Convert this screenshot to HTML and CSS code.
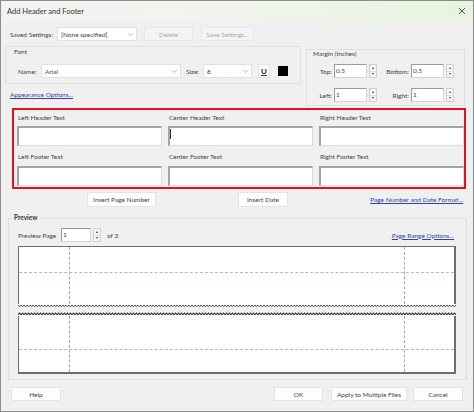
FILE: index.html
```html
<!DOCTYPE html>
<html lang="en">
<head>
    <meta charset="UTF-8">
    <meta name="viewport" content="width=device-width, initial-scale=1.0">
    <title>Add Header and Footer</title>
    <link rel="stylesheet" href="styles.css">
</head>
<body>
    <div class="window">
        <div class="titlebar">
            <span class="title">Add Header and Footer</span>
            <svg class="close" width="8" height="8" viewBox="0 0 8 8">
                <path d="M1 1 L7 7 M7 1 L1 7" stroke="#444" stroke-width="0.9" fill="none"/>
            </svg>
        </div>

        <div class="saved-row">
            <span class="saved-label">Saved Settings:</span>
            <div class="dropdown saved-select">[None specified]
                <svg class="chev" width="5" height="3" viewBox="0 0 5 3"><path d="M0.3 0.3 L2.5 2.5 L4.7 0.3" stroke="#999" stroke-width="0.7" fill="none"/></svg>
            </div>
            <div class="btn disabled delete-btn">Delete</div>
            <div class="btn disabled save-btn">Save Settings...</div>
        </div>

        <div class="settings">
            <div class="font-col">
                <div class="group font-group">
                    <div class="group-title">Font</div>
                    <div class="font-row">
                        <span class="name-label">Name:</span>
                        <div class="dropdown name-select">Arial
                            <svg class="chev" width="5" height="3" viewBox="0 0 5 3"><path d="M0.3 0.3 L2.5 2.5 L4.7 0.3" stroke="#999" stroke-width="0.7" fill="none"/></svg>
                        </div>
                        <span class="size-label">Size:</span>
                        <div class="dropdown size-select">8
                            <svg class="chev" width="5" height="3" viewBox="0 0 5 3"><path d="M0.3 0.3 L2.5 2.5 L4.7 0.3" stroke="#999" stroke-width="0.7" fill="none"/></svg>
                        </div>
                        <div class="underline-btn">U</div>
                        <div class="color-swatch"></div>
                    </div>
                </div>
                <a class="link appearance" href="#">Appearance Options...</a>
            </div>

            <div class="group margin-group">
                <div class="group-title">Margin (Inches)</div>
                <div class="margin-row first">
                    <span class="m-label">Top:</span>
                    <div class="num-input">0.5</div>
                    <div class="spinner"><span class="up"></span><span class="down"></span></div>
                    <span class="m-label wide">Bottom:</span>
                    <div class="num-input">0.5</div>
                    <div class="spinner"><span class="up"></span><span class="down"></span></div>
                </div>
                <div class="margin-row second">
                    <span class="m-label">Left:</span>
                    <div class="num-input">1</div>
                    <div class="spinner"><span class="up"></span><span class="down"></span></div>
                    <span class="m-label wide">Right:</span>
                    <div class="num-input">1</div>
                    <div class="spinner"><span class="up"></span><span class="down"></span></div>
                </div>
            </div>
        </div>

        <div class="hf-box">
            <div class="hf-col">
                <div class="hf-label">Left Header Text</div>
                <div class="text-box"></div>
                <div class="hf-label footer">Left Footer Text</div>
                <div class="text-box footer"></div>
            </div>
            <div class="hf-col">
                <div class="hf-label">Center Header Text</div>
                <div class="text-box"><span class="caret"></span></div>
                <div class="hf-label footer">Center Footer Text</div>
                <div class="text-box footer"></div>
            </div>
            <div class="hf-col">
                <div class="hf-label">Right Header Text</div>
                <div class="text-box"></div>
                <div class="hf-label footer">Right Footer Text</div>
                <div class="text-box footer"></div>
            </div>
        </div>

        <div class="insert-row">
            <div class="btn page-num-btn">Insert Page Number</div>
            <div class="btn date-btn">Insert Date</div>
            <a class="link format-link" href="#">Page Number and Date Format...</a>
        </div>

        <div class="preview-group">
            <span class="preview-title">Preview</span>
            <div class="preview-row">
                <span class="pp-label">Preview Page</span>
                <div class="num-input page-input">1</div>
                <div class="spinner"><span class="up"></span><span class="down"></span></div>
                <span class="of-total">of 3</span>
                <a class="link range-link" href="#">Page Range Options...</a>
            </div>
            <div class="sheet">
                <div class="page page-top">
                    <div class="guide-v left"></div>
                    <div class="guide-v right"></div>
                    <div class="guide-h"></div>
                </div>
                <svg class="tear" width="438" height="4" viewBox="0 0 438 4">
                    <defs>
                        <pattern id="zz-down" width="3" height="4" patternUnits="userSpaceOnUse">
                            <path d="M0 0 H3 V1 L1.5 2.8 L0 1 Z" fill="#fff"/>
                            <path d="M0 1 L1.5 2.8 L3 1" fill="none" stroke="#3c3c3c" stroke-width="0.9"/>
                        </pattern>
                    </defs>
                    <rect width="438" height="4" fill="url(#zz-down)"/>
                </svg>
                <svg class="tear gap" width="438" height="4" viewBox="0 0 438 4">
                    <defs>
                        <pattern id="zz-up" width="3" height="4" patternUnits="userSpaceOnUse">
                            <path d="M0 4 H3 V2.8 L1.5 1 L0 2.8 Z" fill="#fff"/>
                            <path d="M0 2.8 L1.5 1 L3 2.8" fill="none" stroke="#2e2e2e" stroke-width="1.1"/>
                        </pattern>
                    </defs>
                    <rect width="438" height="4" fill="url(#zz-up)"/>
                </svg>
                <div class="page page-bottom">
                    <div class="guide-v left"></div>
                    <div class="guide-v right"></div>
                    <div class="guide-h"></div>
                </div>
            </div>
        </div>

        <div class="bottom-row">
            <div class="btn help-btn">Help</div>
            <div class="btn ok-btn">OK</div>
            <div class="btn apply-btn">Apply to Multiple Files</div>
            <div class="btn cancel-btn">Cancel</div>
        </div>
    </div>
</body>
</html>
```

FILE: styles.css
```css
body {
    margin: 0;
    padding: 0;
    background: #ffffff;
}
.window {
    width: 474px;
    height: 412px;
    box-sizing: border-box;
    border: 1px solid #8d8d8d;
    background: #f0f0f0;
    font-family: Lato, "Noto Sans", sans-serif;
    font-size: 6.5px;
    color: #444444;
    overflow: hidden;
}
.titlebar {
    height: 20px;
    display: flex;
    align-items: center;
    justify-content: space-between;
    padding: 0 7px 0 6px;
    background: linear-gradient(to right, #f3f3f3 0%, #f1f4ee 45%, #e8f4df 100%);
}
.title {
    font-size: 7.5px;
    color: #333333;
}

/* generic controls */
.btn {
    height: 14px;
    box-sizing: border-box;
    border: 1px solid #e4e4e4;
    background: #fdfdfd;
    display: flex;
    align-items: center;
    justify-content: center;
    flex: none;
}
.btn.disabled {
    color: #ababab;
    background: #f4f4f4;
    border-color: #e8e8e8;
}
.dropdown {
    height: 14px;
    box-sizing: border-box;
    border: 1px solid #e1e1e1;
    background: #ffffff;
    display: flex;
    align-items: center;
    padding-left: 3px;
    flex: none;
}
.chev {
    margin-left: auto;
    margin-right: 3px;
}
.link {
    color: #3340b0;
    text-decoration: underline;
}
.group {
    box-sizing: border-box;
    border: 1px solid #e0e0e0;
}
.group-title {
    line-height: 8px;
}
.num-input {
    width: 33px;
    height: 14px;
    box-sizing: border-box;
    border-top: 1px solid #9c9c9c;
    border-left: 1px solid #9c9c9c;
    border-right: 1px solid #d4d4d4;
    border-bottom: 1px solid #d4d4d4;
    background: #ffffff;
    padding: 1px 0 0 1px;
    line-height: 9px;
    flex: none;
}
.spinner {
    width: 8px;
    height: 14px;
    box-sizing: border-box;
    margin-left: 2px;
    border: 1px solid #d0d0d0;
    background: #f5f5f5;
    display: flex;
    flex-direction: column;
    flex: none;
}
.spinner span {
    flex: 1;
    display: flex;
    align-items: center;
    justify-content: center;
}
.spinner .up {
    border-bottom: 1px solid #e0e0e0;
}
.spinner .up::before {
    content: "";
    border-left: 1.5px solid transparent;
    border-right: 1.5px solid transparent;
    border-bottom: 2px solid #444;
}
.spinner .down::before {
    content: "";
    border-left: 1.5px solid transparent;
    border-right: 1.5px solid transparent;
    border-top: 2px solid #444;
}

/* saved settings */
.saved-row {
    height: 14px;
    margin-top: 6px;
    padding-left: 9px;
    display: flex;
    align-items: center;
}
.saved-label {
    width: 47px;
}
.saved-select {
    width: 80px;
}
.delete-btn {
    width: 49px;
    margin-left: 7px;
}
.save-btn {
    width: 53px;
    margin-left: 8px;
}

/* font + margin */
.settings {
    display: flex;
    align-items: flex-start;
    margin-top: 5px;
    padding-left: 4px;
}
.font-col {
    width: 296px;
}
.font-group {
    height: 38px;
    padding-top: 1px;
}
.font-group .group-title {
    padding-left: 8px;
}
.font-row {
    display: flex;
    align-items: center;
    height: 14px;
    margin-top: 8px;
    padding-left: 12px;
}
.name-label {
    width: 23px;
}
.name-select {
    width: 140px;
}
.size-label {
    width: 17px;
    margin-left: 5px;
}
.size-select {
    width: 49px;
}
.underline-btn {
    width: 12px;
    height: 14px;
    box-sizing: border-box;
    margin-left: 6px;
    border: 1px solid #e3e3e3;
    background: #fdfdfd;
    display: flex;
    align-items: center;
    justify-content: center;
    font-family: "Liberation Sans", sans-serif;
    font-size: 8px;
    font-weight: bold;
    color: #333;
    text-decoration: underline;
}
.color-swatch {
    width: 10px;
    height: 10px;
    margin-left: 8px;
    background: #000000;
}
.appearance {
    display: block;
    margin: 6px 0 0 5px;
    line-height: 10px;
}
.margin-group {
    width: 159px;
    height: 57px;
    margin: 3px 0 0 5px;
}
.margin-group .group-title {
    padding-left: 6px;
}
.margin-row {
    display: flex;
    align-items: center;
    height: 14px;
}
.margin-row.first {
    margin-top: 6px;
}
.margin-row.second {
    margin-top: 10px;
}
.m-label {
    width: 25px;
    margin-right: 2px;
    text-align: right;
    flex: none;
}
.m-label.wide {
    width: 32px;
}

/* header / footer fields */
.hf-box {
    width: 454px;
    height: 81px;
    box-sizing: border-box;
    margin: 2px 0 0 11px;
    border: 2px solid #e2121d;
    padding: 3px 0 0 3px;
    display: flex;
    gap: 6px;
}
.hf-col {
    width: 145px;
    display: flex;
    flex-direction: column;
}
.hf-label {
    line-height: 10px;
    padding-left: 1px;
}
.hf-label.footer {
    margin-top: 6px;
}
.text-box {
    height: 20px;
    box-sizing: border-box;
    margin-top: 3px;
    border-top: 2px solid #a4a4a4;
    border-left: 2px solid #a4a4a4;
    border-right: 1px solid #dadada;
    border-bottom: 1px solid #dadada;
    background: #ffffff;
    padding: 1px 0 0 0;
}
.text-box.footer {
    margin-top: 4px;
}
.caret {
    display: block;
    width: 1px;
    height: 10px;
    background: #333;
}

/* insert buttons */
.insert-row {
    display: flex;
    align-items: center;
    height: 15px;
    margin-top: 3px;
}
.insert-row .btn {
    height: 15px;
}
.page-num-btn {
    width: 69px;
    margin-left: 86px;
}
.date-btn {
    width: 50px;
    margin-left: 82px;
}
.format-link {
    margin-left: auto;
    margin-right: 10px;
}

/* preview */
.preview-group {
    position: relative;
    box-sizing: border-box;
    margin: 11px 6px 0 7px;
    border: 1px solid #dedede;
    padding: 9px 10px 5px 9px;
}
.preview-title {
    position: absolute;
    top: -6px;
    left: 4px;
    padding: 0 1px;
    line-height: 10px;
    font-weight: bold;
    color: #333;
    background: #f0f0f0;
}
.preview-row {
    display: flex;
    align-items: center;
    height: 14px;
}
.pp-label {
    width: 43px;
}
.page-input {
    width: 30px;
}
.of-total {
    margin-left: 6px;
}
.range-link {
    margin-left: auto;
    margin-right: 2px;
}
.sheet {
    width: 438px;
    margin-top: 4px;
}
.tear {
    display: block;
}
.tear.gap {
    margin-top: 4px;
}
.page {
    position: relative;
    box-sizing: border-box;
    height: 58px;
    background: #ffffff;
    border-left: 1px solid #6e6e6e;
    border-right: 2px solid #6e6e6e;
}
.page-top {
    border-top: 1px solid #6e6e6e;
}
.page-bottom {
    height: 58px;
    border-bottom: 2px solid #6e6e6e;
}
.guide-v {
    position: absolute;
    top: 0;
    bottom: 0;
    border-left: 1px dashed #a6a6a6;
}
.guide-v.left {
    left: 50px;
}
.guide-v.right {
    left: 385px;
}
.guide-h {
    position: absolute;
    left: 0;
    right: 0;
    border-top: 1px dashed #9dc0d8;
}
.page-top .guide-h {
    top: 25px;
}
.page-bottom .guide-h {
    top: 33px;
}

/* dialog buttons */
.bottom-row {
    display: flex;
    align-items: center;
    height: 14px;
    margin-top: 7px;
}
.help-btn {
    width: 50px;
    margin-left: 10px;
}
.ok-btn {
    width: 49px;
    margin-left: auto;
}
.apply-btn {
    width: 76px;
    margin-left: 8px;
}
.cancel-btn {
    width: 50px;
    margin-left: 6px;
    margin-right: 10px;
}
```
